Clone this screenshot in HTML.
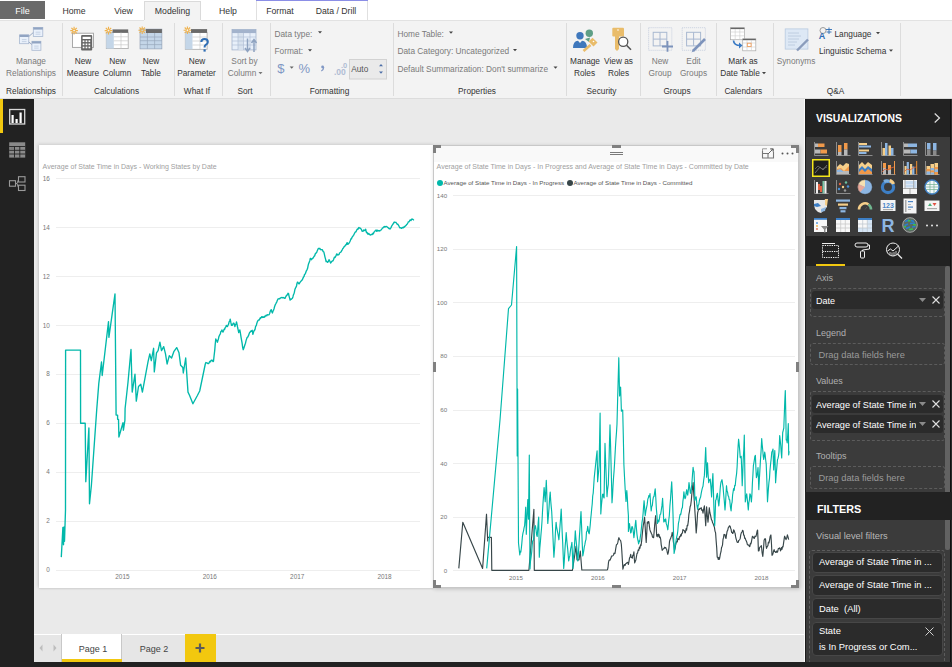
<!DOCTYPE html><html><head><meta charset="utf-8"><style>
html,body{margin:0;padding:0;width:952px;height:667px;overflow:hidden;background:#eaeaea}
body{position:relative;font-family:"Liberation Sans",sans-serif}
.t{position:absolute;line-height:0;white-space:nowrap}
</style></head><body>
<div style="position:absolute;left:0px;top:0px;width:952px;height:20px;background:#fff"></div>
<div style="position:absolute;left:0px;top:1px;width:45px;height:18px;background:#6a6a6a"></div>
<div class="t" style="left:-177.5px;width:400px;text-align:center;top:10.85px;font-size:9px;color:#fff;font-weight:400;letter-spacing:0px;">File</div>
<div class="t" style="left:-126px;width:400px;text-align:center;top:10.96px;font-size:8.7px;color:#333;font-weight:400;letter-spacing:0px;">Home</div>
<div class="t" style="left:-76.5px;width:400px;text-align:center;top:10.96px;font-size:8.7px;color:#333;font-weight:400;letter-spacing:0px;">View</div>
<div style="position:absolute;left:144px;top:1px;width:57px;height:20px;background:#f3f3f3;border:1px solid #dadada;border-bottom:none;box-sizing:border-box"></div>
<div class="t" style="left:-27.5px;width:400px;text-align:center;top:10.96px;font-size:8.7px;color:#333;font-weight:400;letter-spacing:0px;">Modeling</div>
<div class="t" style="left:28px;width:400px;text-align:center;top:10.96px;font-size:8.7px;color:#333;font-weight:400;letter-spacing:0px;">Help</div>
<div style="position:absolute;left:256px;top:0px;width:112px;height:20px;border-left:1px solid #e0e0e0;border-right:1px solid #e0e0e0;box-sizing:border-box"></div>
<div style="position:absolute;left:256px;top:0px;width:112px;height:1px;background:#8b8ee6"></div>
<div class="t" style="left:80px;width:400px;text-align:center;top:10.96px;font-size:8.7px;color:#333;font-weight:400;letter-spacing:0px;">Format</div>
<div class="t" style="left:136px;width:400px;text-align:center;top:10.96px;font-size:8.7px;color:#333;font-weight:400;letter-spacing:0px;">Data / Drill</div>
<div style="position:absolute;left:0px;top:20px;width:952px;height:78px;background:#f3f3f3"></div>
<div style="position:absolute;left:0px;top:20px;width:144px;height:1px;background:#e2e2e2"></div>
<div style="position:absolute;left:201px;top:20px;width:751px;height:1px;background:#e2e2e2"></div>
<div style="position:absolute;left:0px;top:98px;width:952px;height:1px;background:#dcdcdc"></div>
<div style="position:absolute;left:62px;top:23px;width:1px;height:73px;background:#dcdcdc"></div>
<div style="position:absolute;left:174px;top:23px;width:1px;height:73px;background:#dcdcdc"></div>
<div style="position:absolute;left:222px;top:23px;width:1px;height:73px;background:#dcdcdc"></div>
<div style="position:absolute;left:270px;top:23px;width:1px;height:73px;background:#dcdcdc"></div>
<div style="position:absolute;left:393px;top:23px;width:1px;height:73px;background:#dcdcdc"></div>
<div style="position:absolute;left:566px;top:23px;width:1px;height:73px;background:#dcdcdc"></div>
<div style="position:absolute;left:640px;top:23px;width:1px;height:73px;background:#dcdcdc"></div>
<div style="position:absolute;left:716px;top:23px;width:1px;height:73px;background:#dcdcdc"></div>
<div style="position:absolute;left:773px;top:23px;width:1px;height:73px;background:#dcdcdc"></div>
<div style="position:absolute;left:900px;top:23px;width:1px;height:73px;background:#dcdcdc"></div>
<div class="t" style="left:-169px;width:400px;text-align:center;top:61.09px;font-size:8.3px;color:#7a7a7a;font-weight:400;letter-spacing:0px;">Manage</div>
<div class="t" style="left:-169px;width:400px;text-align:center;top:73.09px;font-size:8.3px;color:#7a7a7a;font-weight:400;letter-spacing:0px;">Relationships</div>
<div class="t" style="left:-169px;width:400px;text-align:center;top:90.59px;font-size:8.3px;color:#333;font-weight:400;letter-spacing:0px;">Relationships</div>
<div class="t" style="left:-117px;width:400px;text-align:center;top:61.09px;font-size:8.3px;color:#333;font-weight:400;letter-spacing:0px;">New</div>
<div class="t" style="left:-117px;width:400px;text-align:center;top:73.09px;font-size:8.3px;color:#333;font-weight:400;letter-spacing:0px;">Measure</div>
<div class="t" style="left:-82.5px;width:400px;text-align:center;top:61.09px;font-size:8.3px;color:#333;font-weight:400;letter-spacing:0px;">New</div>
<div class="t" style="left:-83px;width:400px;text-align:center;top:73.09px;font-size:8.3px;color:#333;font-weight:400;letter-spacing:0px;">Column</div>
<div class="t" style="left:-49px;width:400px;text-align:center;top:61.09px;font-size:8.3px;color:#333;font-weight:400;letter-spacing:0px;">New</div>
<div class="t" style="left:-49px;width:400px;text-align:center;top:73.09px;font-size:8.3px;color:#333;font-weight:400;letter-spacing:0px;">Table</div>
<div class="t" style="left:-83.5px;width:400px;text-align:center;top:90.59px;font-size:8.3px;color:#333;font-weight:400;letter-spacing:0px;">Calculations</div>
<div class="t" style="left:-3px;width:400px;text-align:center;top:61.09px;font-size:8.3px;color:#333;font-weight:400;letter-spacing:0px;">New</div>
<div class="t" style="left:-3.5px;width:400px;text-align:center;top:73.09px;font-size:8.3px;color:#333;font-weight:400;letter-spacing:0px;">Parameter</div>
<div class="t" style="left:-3px;width:400px;text-align:center;top:90.59px;font-size:8.3px;color:#333;font-weight:400;letter-spacing:0px;">What If</div>
<div class="t" style="left:44.5px;width:400px;text-align:center;top:61.09px;font-size:8.3px;color:#7a7a7a;font-weight:400;letter-spacing:0px;">Sort by</div>
<div class="t" style="left:42px;width:400px;text-align:center;top:73.09px;font-size:8.3px;color:#7a7a7a;font-weight:400;letter-spacing:0px;">Column</div>
<div class="t" style="left:45px;width:400px;text-align:center;top:90.59px;font-size:8.3px;color:#333;font-weight:400;letter-spacing:0px;">Sort</div>
<div class="t" style="left:274.5px;top:33.59px;font-size:8.3px;color:#7a7a7a;font-weight:400;letter-spacing:0px;">Data type:</div>
<div class="t" style="left:274.5px;top:50.59px;font-size:8.3px;color:#7a7a7a;font-weight:400;letter-spacing:0px;">Format:</div>
<div class="t" style="left:129.5px;width:400px;text-align:center;top:90.59px;font-size:8.3px;color:#333;font-weight:400;letter-spacing:0px;">Formatting</div>
<div class="t" style="left:397.5px;top:33.59px;font-size:8.3px;color:#7a7a7a;font-weight:400;letter-spacing:0px;">Home Table:</div>
<div class="t" style="left:397.5px;top:51.09px;font-size:8.3px;color:#7a7a7a;font-weight:400;letter-spacing:0px;">Data Category: Uncategorized</div>
<div class="t" style="left:397.5px;top:68.59px;font-size:8.3px;color:#7a7a7a;font-weight:400;letter-spacing:0px;">Default Summarization: Don't summarize</div>
<div class="t" style="left:277px;width:400px;text-align:center;top:90.59px;font-size:8.3px;color:#333;font-weight:400;letter-spacing:0px;">Properties</div>
<div class="t" style="left:385px;width:400px;text-align:center;top:61.09px;font-size:8.3px;color:#333;font-weight:400;letter-spacing:0px;">Manage</div>
<div class="t" style="left:384.5px;width:400px;text-align:center;top:73.09px;font-size:8.3px;color:#333;font-weight:400;letter-spacing:0px;">Roles</div>
<div class="t" style="left:418.5px;width:400px;text-align:center;top:61.09px;font-size:8.3px;color:#333;font-weight:400;letter-spacing:0px;">View as</div>
<div class="t" style="left:418.5px;width:400px;text-align:center;top:73.09px;font-size:8.3px;color:#333;font-weight:400;letter-spacing:0px;">Roles</div>
<div class="t" style="left:401.5px;width:400px;text-align:center;top:90.59px;font-size:8.3px;color:#333;font-weight:400;letter-spacing:0px;">Security</div>
<div class="t" style="left:460px;width:400px;text-align:center;top:61.09px;font-size:8.3px;color:#7a7a7a;font-weight:400;letter-spacing:0px;">New</div>
<div class="t" style="left:460px;width:400px;text-align:center;top:73.09px;font-size:8.3px;color:#7a7a7a;font-weight:400;letter-spacing:0px;">Group</div>
<div class="t" style="left:493.5px;width:400px;text-align:center;top:61.09px;font-size:8.3px;color:#7a7a7a;font-weight:400;letter-spacing:0px;">Edit</div>
<div class="t" style="left:493.5px;width:400px;text-align:center;top:73.09px;font-size:8.3px;color:#7a7a7a;font-weight:400;letter-spacing:0px;">Groups</div>
<div class="t" style="left:477px;width:400px;text-align:center;top:90.59px;font-size:8.3px;color:#333;font-weight:400;letter-spacing:0px;">Groups</div>
<div class="t" style="left:543px;width:400px;text-align:center;top:61.09px;font-size:8.3px;color:#333;font-weight:400;letter-spacing:0px;">Mark as</div>
<div class="t" style="left:540px;width:400px;text-align:center;top:73.09px;font-size:8.3px;color:#333;font-weight:400;letter-spacing:0px;">Date Table</div>
<div class="t" style="left:543.3px;width:400px;text-align:center;top:90.59px;font-size:8.3px;color:#333;font-weight:400;letter-spacing:0px;">Calendars</div>
<div class="t" style="left:596px;width:400px;text-align:center;top:61.09px;font-size:8.3px;color:#7a7a7a;font-weight:400;letter-spacing:0px;">Synonyms</div>
<div class="t" style="left:834.5px;top:33.59px;font-size:8.3px;color:#333;font-weight:400;letter-spacing:0px;">Language</div>
<div class="t" style="left:819px;top:50.59px;font-size:8.3px;color:#333;font-weight:400;letter-spacing:0px;">Linguistic Schema</div>
<div class="t" style="left:635.5px;width:400px;text-align:center;top:90.59px;font-size:8.3px;color:#333;font-weight:400;letter-spacing:0px;">Q&amp;A</div>
<svg style="position:absolute;left:0;top:0" width="952" height="99" viewBox="0 0 952 99"><rect x="19.6" y="34.8" width="9.2" height="8.900000000000006" fill="#eaf1fb" stroke="#a9b8d0" stroke-width="0.8"/><rect x="19.6" y="34.8" width="9.2" height="2.2" fill="#91a4c2"/><path d="M21.900000000000002,39.599999999999994 H26.5 M21.900000000000002,41.599999999999994 H26.5" stroke="#b6c4da" stroke-width="0.7"/><rect x="33.3" y="27.4" width="9.5" height="9.100000000000001" fill="#eaf1fb" stroke="#a9b8d0" stroke-width="0.8"/><rect x="33.3" y="27.4" width="9.5" height="2.2" fill="#91a4c2"/><path d="M35.599999999999994,32.199999999999996 H40.5 M35.599999999999994,34.199999999999996 H40.5" stroke="#b6c4da" stroke-width="0.7"/><rect x="31.9" y="41.3" width="9.0" height="9.0" fill="#eaf1fb" stroke="#a9b8d0" stroke-width="0.8"/><rect x="31.9" y="41.3" width="9.0" height="2.2" fill="#91a4c2"/><path d="M34.199999999999996,46.099999999999994 H38.6 M34.199999999999996,48.099999999999994 H38.6" stroke="#b6c4da" stroke-width="0.7"/><path d="M28.8,36.5 L33.3,32.5 M28.8,42 L31.9,44.5" stroke="#98aac6" stroke-width="1"/><rect x="72.5" y="33.2" width="21" height="14.2" fill="#fff" stroke="#a0a0a0" stroke-width="0.9"/><path d="M75.30,30.60 L77.90,30.60 M74.95,31.45 L76.79,33.29 M74.10,31.80 L74.10,34.40 M73.25,31.45 L71.41,33.29 M72.90,30.60 L70.30,30.60 M73.25,29.75 L71.41,27.91 M74.10,29.40 L74.10,26.80 M74.95,29.75 L76.79,27.91 " stroke="#efb14b" stroke-width="1.1"/><circle cx="74.1" cy="30.6" r="1.3" fill="none" stroke="#efb14b" stroke-width="0.8"/><rect x="81.1" y="35.1" width="11.1" height="15.5" rx="1" fill="#666"/><rect x="82.6" y="36.8" width="8.1" height="2.2" fill="#fff"/><rect x="82.7" y="40.4" width="1.7" height="1.7" fill="#fff"/><rect x="82.7" y="43.5" width="1.7" height="1.7" fill="#fff"/><rect x="82.7" y="46.6" width="1.7" height="1.7" fill="#fff"/><rect x="85.6" y="40.4" width="1.7" height="1.7" fill="#fff"/><rect x="85.6" y="43.5" width="1.7" height="1.7" fill="#fff"/><rect x="85.6" y="46.6" width="1.7" height="1.7" fill="#fff"/><rect x="88.5" y="40.4" width="1.7" height="1.7" fill="#fff"/><rect x="88.5" y="43.5" width="1.7" height="1.7" fill="#fff"/><rect x="88.5" y="46.6" width="1.7" height="1.7" fill="#fff"/><rect x="106.3" y="32.6" width="21.9" height="16" fill="#fff" stroke="#a8a8a8" stroke-width="0.8"/><rect x="106.3" y="32.6" width="7.5" height="16" fill="#c4d6e8"/><rect x="112.5" y="29.4" width="15.7" height="3.4" fill="#6a6a6a"/><path d="M113.8,36.8 H128 M113.8,40.8 H128 M113.8,44.8 H128 M121,32.6 V48.6" stroke="#c8c8c8" stroke-width="0.7"/><path d="M109.70,30.60 L112.30,30.60 M109.35,31.45 L111.19,33.29 M108.50,31.80 L108.50,34.40 M107.65,31.45 L105.81,33.29 M107.30,30.60 L104.70,30.60 M107.65,29.75 L105.81,27.91 M108.50,29.40 L108.50,26.80 M109.35,29.75 L111.19,27.91 " stroke="#efb14b" stroke-width="1.1"/><circle cx="108.5" cy="30.6" r="1.3" fill="none" stroke="#efb14b" stroke-width="0.8"/><rect x="140" y="29.1" width="21.9" height="19.8" fill="#c4d6e8" stroke="#8a9ab0" stroke-width="0.6"/><rect x="146" y="29.1" width="15.9" height="3.9" fill="#6a6a6a"/><path d="M140,37 H162 M140,40.7 H162 M140,44.6 H162 M147.4,33 V48.9 M154.6,33 V48.9" stroke="#98a8bc" stroke-width="0.7"/><path d="M143.40,30.20 L146.00,30.20 M143.05,31.05 L144.89,32.89 M142.20,31.40 L142.20,34.00 M141.35,31.05 L139.51,32.89 M141.00,30.20 L138.40,30.20 M141.35,29.35 L139.51,27.51 M142.20,29.00 L142.20,26.40 M143.05,29.35 L144.89,27.51 " stroke="#efb14b" stroke-width="1.1"/><circle cx="142.2" cy="30.2" r="1.3" fill="none" stroke="#efb14b" stroke-width="0.8"/><rect x="185.3" y="32.6" width="21.8" height="16.7" fill="#fff" stroke="#a8a8a8" stroke-width="0.8"/><rect x="185.3" y="32.6" width="7.2" height="16.7" fill="#c4d6e8"/><rect x="191" y="29.1" width="16.1" height="3.8" fill="#6a6a6a"/><path d="M192.5,37 H207 M192.5,41 H207 M192.5,45 H207 M200,33 V49" stroke="#c8c8c8" stroke-width="0.7"/><path d="M188.60,30.20 L191.20,30.20 M188.25,31.05 L190.09,32.89 M187.40,31.40 L187.40,34.00 M186.55,31.05 L184.71,32.89 M186.20,30.20 L183.60,30.20 M186.55,29.35 L184.71,27.51 M187.40,29.00 L187.40,26.40 M188.25,29.35 L190.09,27.51 " stroke="#efb14b" stroke-width="1.1"/><circle cx="187.4" cy="30.2" r="1.3" fill="none" stroke="#efb14b" stroke-width="0.8"/><path d="M201.3,42 Q201.5,39 204.5,39 Q207.8,39 207.8,42 Q207.8,44 205.5,45 Q204.6,45.6 204.6,47.5" stroke="#2e6db4" stroke-width="2.1" fill="none"/><rect x="203.5" y="49.3" width="2.2" height="2.3" fill="#2e6db4"/><rect x="232" y="29.5" width="24" height="20.4" fill="#e8f0fa" stroke="#a3b3cc" stroke-width="0.8"/><rect x="232" y="29.5" width="24" height="3.6" fill="#a3b3cc"/><rect x="238" y="33" width="5.5" height="16.9" fill="#d8e2ee"/><path d="M232,37 H256 M232,41 H256 M232,45 H256 M238,33 V50 M243.5,33 V50 M250,33 V50" stroke="#b2c0d6" stroke-width="0.7"/><path d="M247.5,38.5 V51 M245,48 L247.5,51.5 L250,48" stroke="#8fa3c0" stroke-width="1.5" fill="none"/><path d="M254,52 V40 M251.5,43 L254,39.5 L256.5,43" stroke="#8fa3c0" stroke-width="1.5" fill="none"/><path d="M318,31.3 L322,31.3 L320,33.6z" fill="#444"/><path d="M308,49.3 L312,49.3 L310,51.599999999999994z" fill="#444"/><path d="M289.7,66.5 L293.7,66.5 L291.7,68.8z" fill="#666"/><text x="277.3" y="73.2" font-family="Liberation Sans" font-size="13" fill="#8097c4">$</text><text x="298.6" y="73.2" font-family="Liberation Sans" font-size="13" fill="#8097c4">%</text><circle cx="322.6" cy="67" r="1.4" fill="#8097c4"/><path d="M323.8,67 Q323.8,69.5 321.3,71" stroke="#8097c4" stroke-width="1.1" fill="none"/><text x="334" y="74.5" font-family="Liberation Sans" font-size="8.5" font-weight="700" fill="#b0bcd4">.00</text><text x="341" y="68.3" font-family="Liberation Sans" font-size="7.5" font-weight="700" fill="#b0bcd4">.0</text><rect x="349.5" y="59.5" width="37" height="19.5" fill="#eaeaea" stroke="#d2d2d2" stroke-width="1"/><path d="M379,66.2 L383,66.2 L381,64z M379,71.6 L383,71.6 L381,73.8z" fill="#4d6fa8"/><path d="M449,31.5 L453,31.5 L451,33.8z" fill="#444"/><path d="M513,49 L517,49 L515,51.3z" fill="#444"/><path d="M553.5,66.5 L557.5,66.5 L555.5,68.8z" fill="#444"/><path d="M258.5,72 L262.5,72 L260.5,74.3z" fill="#777"/><path d="M762,72 L766,72 L764,74.3z" fill="#444"/><path d="M876,32 L880,32 L878,34.3z" fill="#444"/><path d="M889,49.5 L893,49.5 L891,51.8z" fill="#444"/><circle cx="589.3" cy="33.3" r="3.7" fill="#5e9f86"/><path d="M585,39 L590,37.5 L589,42z" fill="#5e9f86"/><circle cx="580" cy="35.8" r="3.7" fill="#3f78bc"/><path d="M573,48 Q573,41 578,40.7 L580,43 L582,40.7 Q587,41 587,48z" fill="#3f78bc"/><path d="M583.5,51 L590.5,45" stroke="#e9bc6a" stroke-width="2.6"/><path d="M588.5,41.5 L592.5,37.8 L597.5,42.5 L593.5,46.5 z" fill="#e9bc6a"/><circle cx="593.5" cy="41.5" r="0.8" fill="#fff"/><rect x="612.3" y="27.8" width="11.7" height="8.6" rx="1" fill="#e9bc6a"/><rect x="615" y="36" width="4" height="13" fill="#e9bc6a"/><path d="M615,49 L617,51 L619,49z" fill="#e9bc6a"/><circle cx="618" cy="30" r="0.8" fill="#fff"/><circle cx="623.2" cy="41.8" r="4.6" fill="#fff" stroke="#555" stroke-width="1.3"/><path d="M626.5,45.2 L631,49.7" stroke="#555" stroke-width="1.6"/><rect x="648.6" y="27.7" width="23.2" height="22.6" fill="none" stroke="#bcc7d9" stroke-width="0.8" stroke-dasharray="1,1"/><rect x="653.2" y="32.3" width="13.6" height="13.6" fill="none" stroke="#a8b8d0" stroke-width="1"/><path d="M660,32.3 V45.9 M653.2,39.1 H666.8" stroke="#a8b8d0" stroke-width="1"/><path d="M667.5,41.1 V51.8 M662,46.5 H673" stroke="#7d93bb" stroke-width="1.8"/><rect x="682.2" y="27.7" width="23.2" height="22.6" fill="none" stroke="#bcc7d9" stroke-width="0.8" stroke-dasharray="1,1"/><rect x="686.6" y="32.3" width="14" height="13.6" fill="none" stroke="#a8b8d0" stroke-width="1"/><path d="M693.6,32.3 V45.9 M686.6,39.1 H700.6" stroke="#a8b8d0" stroke-width="1"/><path d="M693,51 L705,39" stroke="#7d93bb" stroke-width="2.6"/><path d="M691.5,52.5 L693.2,49 L694.8,50.8z" fill="#7d93bb"/><rect x="730.6" y="27.7" width="13.8" height="12" fill="#fff" stroke="#aaa" stroke-width="0.7"/><rect x="730.6" y="27.7" width="13.8" height="1.4" fill="#666"/><path d="M730.6,32 H744.4 M730.6,35.8 H744.4 M735.2,29 V39.7 M739.8,29 V39.7" stroke="#ccc" stroke-width="0.6"/><rect x="742.7" y="38.8" width="13.1" height="12" fill="#fff" stroke="#aaa" stroke-width="0.7"/><rect x="742.7" y="38.8" width="13.1" height="1.4" fill="#666"/><path d="M742.7,43 H755.8 M742.7,47 H755.8 M747,40 V50.8 M751.4,40 V50.8" stroke="#ccc" stroke-width="0.6"/><rect x="747.3" y="43.2" width="3.8" height="3.3" fill="none" stroke="#f0a060" stroke-width="0.9"/><path d="M733.5,40.5 Q733.8,45.5 740.5,45.5" stroke="#3a7ac4" stroke-width="1.7" fill="none"/><path d="M739,42.5 L742.5,45.5 L739,48.5z" fill="#3a7ac4"/><rect x="785.2" y="28.9" width="22.7" height="20.2" fill="#dde8f5" stroke="#b8cae0" stroke-width="0.8"/><path d="M788,33 H799 M788,36 H801 M788,39 H799 M788,42 H797 M788,45 H795" stroke="#b8c6da" stroke-width="0.8"/><path d="M797,50.5 L808,39.5" stroke="#8a9cbc" stroke-width="2.4"/><circle cx="823" cy="30.5" r="3" fill="none" stroke="#777" stroke-width="0.7"/><text x="818.8" y="39" font-family="Liberation Sans" font-size="9" font-weight="700" fill="#2e6db4">A</text><path d="M826,29.5 H832 M829,27.5 V34 M826.5,32 H831.5" stroke="#2e6db4" stroke-width="0.9"/></svg>
<div class="t" style="left:351.2px;top:68.50px;font-size:8.3px;color:#555;font-weight:400;letter-spacing:0px;">Auto</div>
<div style="position:absolute;left:0px;top:99px;width:34px;height:568px;background:#222"></div>
<div style="position:absolute;left:0px;top:99px;width:3px;height:34px;background:#f2c80f"></div>
<svg style="position:absolute;left:8px;top:108px" width="19" height="18"><rect x="1.7" y="1.5" width="15" height="14.5" fill="none" stroke="#d8d8d8" stroke-width="1.3"/><rect x="3.5" y="7" width="2.2" height="8" fill="#fff"/><rect x="7.5" y="11" width="2.2" height="4" fill="#fff"/><rect x="11.5" y="4.5" width="2.2" height="10.5" fill="#fff"/></svg>
<svg style="position:absolute;left:8px;top:141px" width="19" height="18"><rect x="1.2" y="1.3" width="16" height="15.3" fill="#8a8a8a"/><path d="M1.2,5.5 H17.2 M1.2,9.3 H17.2 M1.2,13 H17.2 M6.5,5.5 V16.6 M11.8,5.5 V16.6" stroke="#222" stroke-width="0.9"/><rect x="2.5" y="6.3" width="3.3" height="2.3" fill="#7a7a7a"/></svg>
<svg style="position:absolute;left:8px;top:175px" width="19" height="18"><rect x="1.5" y="5.7" width="6" height="5.5" fill="none" stroke="#9a9a9a" stroke-width="1.1"/><rect x="10.5" y="1.7" width="6.5" height="5.3" fill="none" stroke="#9a9a9a" stroke-width="1.1"/><rect x="10.5" y="10.2" width="6.5" height="5.3" fill="none" stroke="#9a9a9a" stroke-width="1.1"/><path d="M7.5,8.5 H9 L10.5,4.5 M9,8.5 L10.5,12.8" stroke="#9a9a9a" stroke-width="1" fill="none"/></svg>
<div style="position:absolute;left:34px;top:99px;width:771px;height:535px;background:#eaeaea"></div>
<div style="position:absolute;left:39px;top:145px;width:395px;height:443px;background:#fff;box-shadow:-1px -1px 3px rgba(0,0,0,0.12), 0 1px 2px rgba(0,0,0,0.1)"></div>
<div style="position:absolute;left:433px;top:145px;width:366px;height:443px;background:#fff;box-shadow:1px 1px 4px rgba(0,0,0,0.2)"></div>
<div class="t" style="left:42.6px;top:166.55px;font-size:7px;color:#a0a0a0;font-weight:400;letter-spacing:0px;">Average of State Time in Days - Working States by Date</div>
<div style="position:absolute;left:56px;top:178px;width:364px;height:1px;background:#eeeeee"></div>
<div class="t" style="left:-350.2px;width:400px;text-align:right;top:178.86px;font-size:6.4px;color:#777;font-weight:400;letter-spacing:0px;">16</div>
<div style="position:absolute;left:56px;top:227px;width:364px;height:1px;background:#eeeeee"></div>
<div class="t" style="left:-350.2px;width:400px;text-align:right;top:227.76px;font-size:6.4px;color:#777;font-weight:400;letter-spacing:0px;">14</div>
<div style="position:absolute;left:56px;top:276px;width:364px;height:1px;background:#eeeeee"></div>
<div class="t" style="left:-350.2px;width:400px;text-align:right;top:276.66px;font-size:6.4px;color:#777;font-weight:400;letter-spacing:0px;">12</div>
<div style="position:absolute;left:56px;top:325px;width:364px;height:1px;background:#eeeeee"></div>
<div class="t" style="left:-350.2px;width:400px;text-align:right;top:325.56px;font-size:6.4px;color:#777;font-weight:400;letter-spacing:0px;">10</div>
<div style="position:absolute;left:56px;top:374px;width:364px;height:1px;background:#eeeeee"></div>
<div class="t" style="left:-350.2px;width:400px;text-align:right;top:374.46px;font-size:6.4px;color:#777;font-weight:400;letter-spacing:0px;">8</div>
<div style="position:absolute;left:56px;top:423px;width:364px;height:1px;background:#eeeeee"></div>
<div class="t" style="left:-350.2px;width:400px;text-align:right;top:423.36px;font-size:6.4px;color:#777;font-weight:400;letter-spacing:0px;">6</div>
<div style="position:absolute;left:56px;top:472px;width:364px;height:1px;background:#eeeeee"></div>
<div class="t" style="left:-350.2px;width:400px;text-align:right;top:472.26px;font-size:6.4px;color:#777;font-weight:400;letter-spacing:0px;">4</div>
<div style="position:absolute;left:56px;top:521px;width:364px;height:1px;background:#eeeeee"></div>
<div class="t" style="left:-350.2px;width:400px;text-align:right;top:521.16px;font-size:6.4px;color:#777;font-weight:400;letter-spacing:0px;">2</div>
<div style="position:absolute;left:56px;top:570px;width:364px;height:1px;background:#eeeeee"></div>
<div class="t" style="left:-350.2px;width:400px;text-align:right;top:570.06px;font-size:6.4px;color:#777;font-weight:400;letter-spacing:0px;">0</div>
<div class="t" style="left:-77.6px;width:400px;text-align:center;top:576.56px;font-size:6.4px;color:#777;font-weight:400;letter-spacing:0px;">2015</div>
<div class="t" style="left:9.800000000000011px;width:400px;text-align:center;top:576.56px;font-size:6.4px;color:#777;font-weight:400;letter-spacing:0px;">2016</div>
<div class="t" style="left:97.19999999999999px;width:400px;text-align:center;top:576.56px;font-size:6.4px;color:#777;font-weight:400;letter-spacing:0px;">2017</div>
<div class="t" style="left:184.5px;width:400px;text-align:center;top:576.56px;font-size:6.4px;color:#777;font-weight:400;letter-spacing:0px;">2018</div>
<div style="position:absolute;left:433px;top:145px;width:366px;height:443px;border:1px solid #c8c8c8;box-sizing:border-box"></div>
<div style="position:absolute;left:434px;top:146px;width:364px;height:16px;background:#f9f9f9"></div>
<div class="t" style="left:436.6px;top:167.25px;font-size:7px;color:#a0a0a0;font-weight:400;letter-spacing:0px;">Average of State Time in Days - In Progress and Average of State Time in Days - Committed by Date</div>
<div style="position:absolute;left:437px;top:180px;width:6px;height:6px;border-radius:50%;background:#01b8aa"></div>
<div class="t" style="left:443.5px;top:183.03px;font-size:6.2px;color:#555;font-weight:400;letter-spacing:0px;">Average of State Time in Days - In Progress</div>
<div style="position:absolute;left:567px;top:180px;width:6px;height:6px;border-radius:50%;background:#374649"></div>
<div class="t" style="left:573.5px;top:183.03px;font-size:6.2px;color:#555;font-weight:400;letter-spacing:0px;">Average of State Time in Days - Committed</div>
<div style="position:absolute;left:453px;top:195px;width:342px;height:1px;background:#eeeeee"></div>
<div class="t" style="left:47.19999999999999px;width:400px;text-align:right;top:195.73px;font-size:6.2px;color:#777;font-weight:400;letter-spacing:0px;">140</div>
<div style="position:absolute;left:453px;top:249px;width:342px;height:1px;background:#eeeeee"></div>
<div class="t" style="left:47.19999999999999px;width:400px;text-align:right;top:249.30px;font-size:6.2px;color:#777;font-weight:400;letter-spacing:0px;">120</div>
<div style="position:absolute;left:453px;top:302px;width:342px;height:1px;background:#eeeeee"></div>
<div class="t" style="left:47.19999999999999px;width:400px;text-align:right;top:302.87px;font-size:6.2px;color:#777;font-weight:400;letter-spacing:0px;">100</div>
<div style="position:absolute;left:453px;top:356px;width:342px;height:1px;background:#eeeeee"></div>
<div class="t" style="left:47.19999999999999px;width:400px;text-align:right;top:356.44px;font-size:6.2px;color:#777;font-weight:400;letter-spacing:0px;">80</div>
<div style="position:absolute;left:453px;top:410px;width:342px;height:1px;background:#eeeeee"></div>
<div class="t" style="left:47.19999999999999px;width:400px;text-align:right;top:410.01px;font-size:6.2px;color:#777;font-weight:400;letter-spacing:0px;">60</div>
<div style="position:absolute;left:453px;top:463px;width:342px;height:1px;background:#eeeeee"></div>
<div class="t" style="left:47.19999999999999px;width:400px;text-align:right;top:463.58px;font-size:6.2px;color:#777;font-weight:400;letter-spacing:0px;">40</div>
<div style="position:absolute;left:453px;top:517px;width:342px;height:1px;background:#eeeeee"></div>
<div class="t" style="left:47.19999999999999px;width:400px;text-align:right;top:517.15px;font-size:6.2px;color:#777;font-weight:400;letter-spacing:0px;">20</div>
<div style="position:absolute;left:453px;top:570px;width:342px;height:1px;background:#eeeeee"></div>
<div class="t" style="left:47.19999999999999px;width:400px;text-align:right;top:570.72px;font-size:6.2px;color:#777;font-weight:400;letter-spacing:0px;">0</div>
<div class="t" style="left:316px;width:400px;text-align:center;top:578.03px;font-size:6.2px;color:#777;font-weight:400;letter-spacing:0px;">2015</div>
<div class="t" style="left:397.9px;width:400px;text-align:center;top:578.03px;font-size:6.2px;color:#777;font-weight:400;letter-spacing:0px;">2016</div>
<div class="t" style="left:479.70000000000005px;width:400px;text-align:center;top:578.03px;font-size:6.2px;color:#777;font-weight:400;letter-spacing:0px;">2017</div>
<div class="t" style="left:561.5px;width:400px;text-align:center;top:578.03px;font-size:6.2px;color:#777;font-weight:400;letter-spacing:0px;">2018</div>
<div style="position:absolute;left:433px;top:145px;width:8px;height:3px;background:#808080"></div>
<div style="position:absolute;left:433px;top:145px;width:3px;height:8px;background:#808080"></div>
<div style="position:absolute;left:791px;top:145px;width:8px;height:3px;background:#808080"></div>
<div style="position:absolute;left:796px;top:145px;width:3px;height:8px;background:#808080"></div>
<div style="position:absolute;left:433px;top:585px;width:8px;height:3px;background:#808080"></div>
<div style="position:absolute;left:433px;top:580px;width:3px;height:8px;background:#808080"></div>
<div style="position:absolute;left:791px;top:585px;width:8px;height:3px;background:#808080"></div>
<div style="position:absolute;left:796px;top:580px;width:3px;height:8px;background:#808080"></div>
<div style="position:absolute;left:612px;top:145px;width:9px;height:3px;background:#808080"></div>
<div style="position:absolute;left:612px;top:585px;width:9px;height:3px;background:#808080"></div>
<div style="position:absolute;left:433px;top:362px;width:3px;height:10px;background:#808080"></div>
<div style="position:absolute;left:796px;top:362px;width:3px;height:10px;background:#808080"></div>
<svg style="position:absolute;left:760px;top:146px" width="36" height="14"><path d="M2.5,5 V12 H13.5 V5.5 M2.5,12 M2.5,7.5 H8 V12" stroke="#777" stroke-width="1.1" fill="none"/><path d="M2.5,5 V2.8 H7 M10,2.8 H13.5 V5.5" stroke="#999" stroke-width="1" fill="none"/><path d="M8,8 L13,3 M10.5,3 H13 V5.5" stroke="#666" stroke-width="1" fill="none"/><circle cx="22.5" cy="7.5" r="1" fill="#555"/><circle cx="27.5" cy="7.5" r="1" fill="#555"/><circle cx="32.5" cy="7.5" r="1" fill="#555"/></svg>
<div style="position:absolute;left:610px;top:152px;width:13px;height:1px;background:#7a7a7a"></div>
<div style="position:absolute;left:610px;top:154px;width:13px;height:1px;background:#7a7a7a"></div>
<svg style="position:absolute;left:0;top:0" width="952" height="667" viewBox="0 0 952 667"><polyline points="61.3,557.1 62.9,527.4 63.5,544.7 64.0,527.0 64.5,541.3 65.5,509.9 65.6,350.1 80.5,350.1 80.6,423.2 85.2,423.2 85.8,481.7 88.9,428.0 89.5,503.7 91.4,485.2 96.7,410.0 98.8,383.4 101.5,362.0 102.2,375.5 108.5,321.6 108.9,337.3 115.0,293.9 116.1,415.1 117.6,415.1 117.6,419.3 118.5,419.3 118.9,437.0 123.0,422.7 123.4,430.2 124.9,420.5 125.1,408.5 128.0,382.2 131.0,349.5 132.2,392.1 135.0,374.2 136.3,401.1 138.5,386.5 140.8,384.3 142.4,392.1 145.3,376.4 148.0,361.8 149.8,353.9 151.3,360.7 153.6,348.3 154.3,371.9 156.5,352.8 158.1,350.6 159.9,342.2 161.5,350.6 163.7,346.7 165.5,353.9 167.1,364.0 169.3,355.7 171.6,358.0 173.8,351.7 176.7,347.6 179.0,352.8 180.6,365.2 182.8,367.4 183.3,373.0 185.7,358.0 188.0,392.1 189.6,395.5 192.9,403.8 197.4,395.5 199.7,391.0 205.3,364.0 205.7,362.9 206.0,362.5 206.6,362.8 207.2,362.9 207.8,363.5 208.4,363.6 208.9,363.2 209.5,361.9 210.1,361.2 210.6,361.8 211.1,360.4 211.7,360.2 212.3,360.2 212.9,361.6 213.5,361.3 214.1,355.7 214.7,350.6 215.2,344.5 215.8,338.9 216.3,340.2 216.9,340.6 217.4,342.2 217.9,340.5 218.4,339.0 218.9,336.6 219.4,335.5 219.9,334.7 220.4,333.5 220.9,331.5 221.4,331.4 221.9,329.9 222.4,331.1 223.0,332.1 223.6,330.7 224.1,329.2 224.7,329.3 225.2,327.6 225.8,326.8 226.3,325.4 226.9,326.5 227.5,326.5 228.0,325.3 228.6,324.1 229.1,321.9 229.7,321.0 230.2,319.1 230.8,322.2 231.5,325.4 232.1,325.4 232.7,324.8 233.2,323.1 233.8,323.1 234.4,324.3 234.9,326.5 235.4,324.6 236.0,324.2 236.5,322.0 237.1,324.6 237.6,327.5 238.1,329.7 238.7,332.6 239.2,331.3 239.8,329.9 240.4,333.0 240.9,336.3 241.5,339.9 242.1,343.2 242.6,347.0 243.2,349.7 243.8,348.2 244.3,346.7 244.9,344.8 245.5,343.2 246.0,340.9 246.6,338.9 247.2,337.3 247.7,337.1 248.2,336.2 248.8,334.9 249.3,333.3 249.9,332.1 250.5,331.9 251.1,330.8 251.6,331.2 252.2,330.3 252.6,332.5 252.9,334.4 253.4,332.6 254.0,330.8 254.5,330.4 255.1,329.1 255.6,326.3 256.2,325.8 256.7,323.8 257.3,321.9 257.8,320.9 258.4,320.0 258.9,320.1 259.5,319.7 260.1,318.0 260.6,318.2 261.2,317.5 261.7,316.7 262.2,317.5 262.7,316.8 263.2,317.4 263.7,317.3 264.2,316.5 264.7,317.0 265.2,315.9 265.7,316.0 266.2,315.2 266.8,315.7 267.4,314.7 267.9,314.8 268.4,314.9 269.0,314.8 269.6,313.7 270.1,311.8 270.7,310.3 271.3,309.7 271.9,311.9 272.4,313.0 273.0,311.1 273.5,310.3 274.1,308.5 274.7,306.3 275.2,304.9 275.8,303.8 276.4,302.6 276.9,301.6 277.4,300.3 278.0,298.9 278.6,298.8 279.1,298.6 279.7,298.8 280.3,298.0 280.9,297.8 281.6,297.5 282.2,297.4 282.8,297.9 283.4,297.5 283.9,297.8 284.5,298.3 285.0,298.4 285.5,297.1 286.0,296.5 286.5,295.2 287.0,295.1 287.5,294.7 288.0,293.3 288.5,293.4 289.0,295.8 289.6,298.1 290.1,300.1 290.7,299.0 291.2,299.4 291.8,298.7 292.4,298.3 292.9,296.9 293.4,294.9 293.9,293.7 294.4,292.2 294.9,289.5 295.5,288.0 296.0,287.2 296.5,286.0 297.0,283.4 297.5,282.1 298.0,282.6 298.6,283.4 299.1,283.9 299.7,282.9 300.2,282.2 300.8,281.4 301.4,280.7 301.9,280.3 302.5,279.4 303.0,278.1 303.5,277.1 304.0,276.6 304.5,274.5 305.0,274.2 305.5,273.3 306.0,271.7 306.5,270.5 307.0,269.8 307.6,268.3 308.1,265.7 308.6,263.7 309.2,262.2 309.8,260.7 310.3,258.5 310.9,258.5 311.5,259.7 312.1,258.8 312.6,258.1 313.1,258.1 313.7,257.0 314.2,256.1 314.7,255.8 315.2,254.0 315.7,253.3 316.2,252.9 316.7,252.4 317.2,250.9 317.7,249.7 318.2,248.7 318.7,248.4 319.3,248.7 319.9,248.4 320.4,249.5 321.0,249.8 321.6,249.6 322.2,249.7 322.7,250.4 323.2,251.7 323.8,251.8 324.4,254.4 325.0,257.1 325.5,258.9 326.1,261.5 326.6,261.3 327.1,261.8 327.6,262.4 328.3,261.5 329.0,259.7 329.5,260.5 330.1,261.7 330.6,263.0 331.2,262.2 331.8,261.6 332.3,260.9 332.9,260.9 333.5,259.7 334.0,258.3 334.5,257.1 335.1,257.5 335.6,256.4 336.1,255.6 336.6,254.0 337.2,254.1 337.8,255.1 338.4,254.7 339.0,254.6 339.6,252.8 340.2,252.5 340.7,252.2 341.2,251.6 341.7,250.7 342.2,249.8 342.7,248.8 343.2,248.2 343.7,247.4 344.2,246.5 344.7,246.5 345.2,245.7 345.8,244.7 346.3,244.7 346.8,242.9 347.4,242.8 347.6,244.2 347.9,244.4 348.4,243.8 348.9,243.3 349.4,242.5 349.9,241.6 350.4,240.4 351.0,238.7 351.5,238.9 352.0,237.3 352.5,236.6 353.0,236.1 353.6,235.3 354.2,234.0 354.8,232.8 355.4,231.9 355.9,231.9 356.4,230.8 356.9,229.7 357.5,229.0 358.0,229.2 358.5,228.0 359.0,227.4 359.6,228.2 360.2,228.1 360.8,228.7 361.5,229.6 362.1,231.4 362.6,231.1 363.1,231.2 363.6,230.0 364.2,230.6 364.7,230.4 365.2,229.9 365.7,229.2 366.1,231.5 366.6,232.8 367.1,232.4 367.6,233.6 368.1,234.3 368.7,233.4 369.2,234.1 369.7,234.4 370.2,235.0 370.7,234.8 371.3,234.5 371.8,234.3 372.3,234.5 372.9,233.2 373.4,233.7 373.9,232.3 374.5,231.6 375.1,230.8 375.6,230.5 376.1,230.0 376.6,231.3 377.1,231.2 377.6,230.2 378.2,230.8 378.7,230.6 379.2,230.7 379.7,231.0 380.2,230.3 380.8,230.2 381.3,229.6 381.9,228.8 382.4,228.1 383.0,227.8 383.5,227.0 384.1,227.1 384.6,226.5 385.1,227.0 385.7,226.6 386.2,226.4 386.7,226.6 387.3,227.1 387.8,227.4 388.4,227.9 388.9,228.6 389.4,228.4 390.0,229.0 390.5,228.5 391.1,227.4 391.6,226.3 392.1,225.3 392.6,224.6 393.1,224.0 393.7,222.8 394.2,222.0 394.7,222.5 395.2,222.4 395.8,222.3 396.3,222.9 396.8,223.6 397.3,224.4 397.8,224.1 398.4,225.2 398.9,225.9 399.4,227.1 399.9,227.8 400.4,227.8 400.9,227.6 401.4,228.4 401.9,228.2 402.5,227.5 403.0,227.7 403.5,227.8 404.0,226.7 404.6,227.0 405.1,226.2 405.6,225.9 406.2,225.2 406.7,224.4 407.3,223.9 407.8,223.0 408.3,221.8 408.9,221.8 409.4,221.1 409.9,220.1 410.4,220.0 411.0,220.5 411.5,219.2 412.0,219.5 412.6,219.2 413.2,219.5 413.8,220.4" fill="none" stroke="#01b8aa" stroke-width="1.35" stroke-linejoin="round"/><polyline points="458.8,568.4 462.8,522.3 482.6,568.4 486.5,514.2 487.7,540.9 487.7,537.4 491.4,537.4 491.8,570.3 528.9,570.3 533.9,509.3 534.3,570.3 572.4,570.3 576.1,546.1 577.0,559.8 579.0,559.8 580.3,551.0 581.8,570.0 607.0,570.0 607.5,569.6 608.0,567.5 608.5,562.3 609.0,560.3 609.5,559.8 610.0,560.2 610.5,559.1 611.0,558.1 611.5,556.1 612.0,556.0 612.5,556.0 613.0,555.6 613.5,555.0 614.0,553.1 614.5,553.7 615.0,553.5 615.7,548.8 616.4,544.9 616.9,544.3 617.4,543.8 617.9,542.2 618.4,539.3 618.9,537.7 619.5,539.1 620.1,540.0 620.7,540.8 621.3,544.0 621.8,550.7 622.4,560.7 622.9,569.2 623.4,567.0 623.9,565.6 624.4,564.5 625.0,565.5 625.6,563.8 626.2,563.5 626.8,562.9 627.3,562.5 627.9,562.3 628.4,564.5 629.0,561.3 629.5,558.1 630.1,556.9 630.7,554.3 631.2,557.4 631.8,557.5 632.3,558.2 632.8,555.0 633.4,555.4 633.9,551.9 634.3,558.5 634.7,562.9 635.3,561.4 635.9,559.7 636.4,556.8 637.0,553.5 637.6,553.0 638.2,549.8 638.8,550.5 639.4,547.2 639.9,548.3 640.5,544.9 641.0,545.6 641.6,541.4 642.1,536.1 642.7,530.1 643.3,525.1 644.0,521.3 644.6,517.2 645.1,525.6 645.7,535.5 646.2,542.4 646.8,532.2 647.3,522.0 647.8,523.2 648.4,521.5 648.9,522.0 649.4,526.5 649.9,529.7 650.4,531.4 650.9,532.3 651.5,533.8 652.0,534.6 652.5,537.1 653.1,537.5 653.6,537.7 654.1,532.2 654.6,525.7 655.1,520.6 655.6,515.7 656.2,526.6 656.7,536.1 657.3,534.5 657.9,536.8 658.5,534.1 659.1,534.6 659.6,537.6 660.2,537.0 660.7,539.3 661.2,544.6 661.7,547.4 662.2,550.3 662.8,549.5 663.4,548.8 664.0,548.5 664.6,547.2 665.1,548.0 665.7,547.5 666.2,548.7 666.7,549.5 667.3,552.5 667.8,554.3 668.4,552.1 669.0,547.2 669.5,541.5 670.1,539.3 670.6,538.7 671.2,536.7 671.7,535.6 672.2,532.4 672.8,535.8 673.4,542.2 673.9,544.2 674.5,550.3 675.0,548.6 675.6,545.0 676.2,542.6 676.7,541.3 677.3,541.9 677.8,538.4 678.4,539.2 679.0,539.6 679.5,536.7 680.1,536.9 680.7,534.7 681.2,536.0 681.8,533.2 682.4,533.1 682.9,529.5 683.5,530.1 684.0,530.5 684.5,530.8 685.0,532.9 685.5,532.1 686.1,528.5 686.6,530.2 687.2,525.4 687.7,525.7 688.3,521.7 688.9,514.4 689.5,511.3 690.1,506.8 690.7,505.2 691.3,500.5 691.9,493.3 692.5,487.4 693.1,482.6 693.7,492.9 694.3,501.3 694.9,511.3 695.5,520.5 696.2,532.9 696.9,524.8 697.6,513.1 698.2,510.6 698.8,509.0 699.4,509.5 700.0,508.3 700.6,508.7 701.2,507.7 701.8,510.4 702.4,509.9 703.0,513.1 703.7,508.9 704.4,505.9 705.0,514.1 705.7,525.7 706.2,516.1 706.6,506.8 707.3,515.4 708.0,522.1 708.6,515.8 709.3,507.7 709.9,512.7 710.5,514.9 711.0,517.6 711.5,519.8 712.0,520.3 712.6,522.8 713.2,523.8 713.8,525.7 714.4,527.1 715.0,531.1 715.6,532.9 716.1,540.3 716.7,547.6 717.2,557.1 717.8,557.5 718.3,559.5 718.9,557.4 719.4,559.3 719.9,557.0 720.4,553.8 721.0,551.7 721.5,547.8 722.0,546.5 722.5,545.1 723.0,539.5 723.5,537.7 724.0,534.3 724.5,535.0 725.0,534.6 725.5,537.6 726.0,538.4 726.6,534.4 727.1,531.4 727.7,530.3 728.3,527.6 728.9,527.0 729.5,525.8 730.1,526.2 730.6,528.2 731.1,529.3 731.6,532.5 732.1,532.3 732.6,533.4 733.1,533.1 733.6,529.8 734.1,530.3 734.6,532.1 735.1,533.4 735.6,536.7 736.1,538.8 736.6,540.4 737.1,542.1 737.7,542.5 738.2,542.4 738.7,540.5 739.2,540.1 739.7,539.5 740.2,538.4 740.8,534.6 741.4,532.7 742.0,532.0 742.6,530.3 743.1,530.9 743.7,535.2 744.2,535.4 744.7,538.4 745.2,538.2 745.7,539.7 746.3,541.0 746.8,542.2 747.3,544.4 747.8,544.9 748.3,545.1 748.9,545.0 749.4,546.6 749.9,546.5 750.4,543.4 750.9,543.9 751.4,542.0 751.9,539.2 752.4,536.3 752.9,536.6 753.4,537.4 753.9,538.2 754.4,538.4 754.9,536.1 755.5,536.6 756.0,536.2 756.5,534.3 757.1,531.0 757.6,530.1 758.0,539.1 758.4,551.0 759.0,550.8 759.5,547.9 760.1,547.0 760.8,546.4 761.4,545.7 762.1,552.6 762.8,556.5 763.5,548.8 764.1,540.3 764.8,538.8 765.5,538.9 766.0,545.4 766.5,548.4 767.2,546.6 767.9,545.7 768.4,542.2 769.0,542.8 769.5,540.3 770.2,536.2 770.9,534.9 771.5,544.3 772.0,555.1 772.5,555.0 773.1,553.0 773.6,551.0 774.1,549.6 774.6,551.5 775.1,551.7 775.6,552.4 776.1,552.2 776.6,551.0 777.1,552.3 777.6,551.8 778.3,548.6 779.0,548.4 779.5,547.9 780.0,548.6 780.5,550.9 781.0,549.7 781.5,547.5 782.0,549.3 782.5,546.6 783.0,547.0 783.5,543.7 784.1,539.4 784.6,536.2 785.3,537.8 786.0,539.6 786.7,538.2 787.4,534.9 788.0,536.9 788.7,539.6" fill="none" stroke="#374649" stroke-width="1.15" stroke-linejoin="round"/><polyline points="486.7,568.4 500.0,420.0 508.5,308.6 511.5,305.0 516.6,246.5 517.2,456.0 517.6,389.0 518.5,543.0 519.8,555.0 520.3,551.4 520.8,552.1 521.3,548.5 521.8,543.6 522.4,536.5 523.0,532.8 523.5,531.1 524.0,528.2 524.6,525.7 525.2,517.1 525.7,507.2 526.0,521.9 526.3,534.3 526.8,521.1 527.3,509.3 527.8,499.6 528.1,510.7 528.5,519.1 528.9,486.8 529.3,455.0 529.6,513.0 530.0,569.0 530.5,561.1 531.1,556.9 531.7,552.0 532.2,545.2 532.7,540.9 533.3,540.5 533.8,537.1 534.3,530.3 534.9,527.1 535.4,525.7 536.0,529.5 536.6,534.7 537.2,536.5 537.7,529.5 538.2,522.4 538.7,517.0 539.0,536.8 539.3,557.2 539.8,548.1 540.4,541.7 540.9,535.4 541.5,528.5 542.0,521.3 542.5,511.8 543.0,503.4 543.6,494.9 544.1,487.6 544.7,494.5 545.2,501.7 545.8,490.2 546.3,480.4 546.8,492.9 547.3,510.5 547.8,523.5 548.4,515.9 549.0,508.3 549.6,498.6 550.2,492.0 550.7,500.5 551.2,506.4 551.7,511.5 552.2,521.4 552.8,533.7 553.4,546.7 553.9,557.2 554.5,549.3 555.0,541.5 555.5,530.8 556.1,522.4 556.6,527.0 557.1,529.6 557.6,532.2 558.2,535.2 558.9,539.8 559.5,532.5 560.0,525.9 560.6,518.1 561.2,509.0 561.7,520.9 562.2,533.1 562.7,542.8 563.2,555.5 563.7,568.4 564.2,562.4 564.7,553.7 565.2,545.6 565.7,539.9 566.2,532.5 566.7,539.0 567.2,544.6 567.7,549.1 568.2,555.1 568.7,561.0 569.2,557.9 569.8,555.9 570.3,551.8 570.8,548.2 571.4,545.5 571.9,542.4 572.4,553.5 572.9,568.4 573.5,557.2 574.1,550.4 574.7,542.1 575.3,530.8 575.8,537.2 576.3,542.5 576.8,547.6 577.3,555.0 577.8,561.0 578.3,554.7 578.9,545.6 579.4,536.4 579.9,529.4 580.5,518.7 581.0,511.5 581.6,526.4 582.2,543.0 582.8,556.0 583.3,553.5 583.8,550.3 584.3,546.8 584.8,544.9 585.4,541.4 586.0,539.3 586.5,531.8 587.1,531.2 587.7,526.3 588.2,530.1 588.7,532.8 589.2,533.8 589.7,529.8 590.2,525.1 590.7,519.0 591.2,514.2 591.7,508.7 592.2,504.0 592.7,496.0 593.2,493.1 593.7,485.7 594.2,478.1 594.7,473.1 595.3,467.5 595.9,461.9 596.5,455.8 597.1,450.8 597.4,465.7 597.6,481.8 598.1,476.6 598.6,471.6 599.1,465.7 599.6,439.8 600.1,413.0 600.5,463.3 600.8,514.0 601.4,505.5 602.0,499.7 602.6,494.2 603.1,494.1 603.6,497.0 604.1,497.9 604.5,472.1 605.0,443.4 605.5,457.9 606.0,471.2 606.5,484.6 607.0,496.6 607.6,489.5 608.3,484.3 608.9,465.9 609.4,445.4 610.0,424.9 610.5,442.7 611.0,461.9 611.5,481.4 612.0,502.8 612.5,496.1 613.0,486.3 613.5,478.1 614.0,471.9 614.5,464.4 615.0,455.3 615.5,446.2 616.0,438.6 616.5,432.1 617.0,424.0 617.6,400.6 618.2,378.9 618.8,357.7 619.2,377.7 619.6,396.0 620.1,391.3 620.6,387.0 621.0,398.4 621.4,411.2 622.0,410.5 622.7,410.0 623.3,435.5 623.9,464.8 624.5,476.8 625.2,489.7 625.6,495.3 626.0,501.5 626.4,494.8 626.8,490.5 627.3,497.3 627.9,508.9 628.4,515.7 628.4,523.6 628.4,531.4 629.0,526.3 629.5,523.5 630.1,528.7 630.7,533.0 631.2,532.2 631.8,526.9 632.3,526.7 632.8,528.4 633.4,532.6 633.9,537.7 634.5,532.8 635.2,524.8 635.8,520.4 636.4,528.3 637.0,534.6 637.5,538.4 638.1,541.0 638.6,544.0 639.1,540.8 639.7,541.7 640.2,537.7 640.8,534.2 641.4,528.3 642.0,522.4 642.6,518.8 643.1,513.4 643.6,506.3 644.1,500.7 644.7,508.5 645.2,515.7 645.9,511.0 646.5,507.8 647.1,504.9 647.8,499.2 648.4,497.6 648.9,495.5 649.5,496.8 650.0,493.6 650.6,503.8 651.2,511.0 651.7,506.8 652.3,505.6 652.8,500.7 653.4,497.0 654.0,496.6 654.6,492.8 655.2,488.9 655.8,498.0 656.3,507.8 656.9,514.7 657.5,523.5 658.1,520.0 658.8,521.9 659.4,518.8 660.0,514.6 660.7,514.0 661.3,510.0 662.0,505.4 662.6,498.3 663.2,510.4 663.8,522.0 664.4,519.6 665.1,521.3 665.7,518.8 666.2,523.4 666.8,525.1 667.3,527.1 667.8,529.8 668.3,524.6 668.8,519.8 669.3,515.7 669.9,506.0 670.5,499.4 671.1,490.0 671.7,481.8 672.4,496.7 673.0,514.0 673.5,532.2 674.1,553.5 674.6,550.8 675.1,546.0 675.7,543.5 676.2,539.5 676.7,536.9 677.3,534.6 677.8,531.0 678.4,523.7 679.0,520.7 679.5,517.5 680.1,514.4 680.7,514.6 681.2,512.1 681.8,508.7 682.4,507.6 682.9,501.2 683.4,497.8 683.9,491.9 684.5,496.7 685.0,498.7 685.6,497.4 686.2,492.1 686.8,489.7 687.2,493.9 687.7,495.1 688.4,489.6 689.0,482.6 689.7,487.9 690.4,493.3 691.1,490.8 691.8,484.4 692.5,474.8 693.1,467.3 693.5,470.5 694.0,471.8 694.5,484.5 694.9,500.5 695.5,497.4 696.2,496.9 696.9,504.8 697.6,509.5 698.2,505.4 698.8,504.5 699.4,500.5 700.0,498.5 700.6,497.1 701.2,493.3 701.8,490.4 702.4,487.9 703.0,486.2 703.7,480.0 704.4,475.4 705.0,462.9 705.7,447.5 706.2,462.8 706.6,477.2 707.0,471.8 707.5,462.8 708.1,474.2 708.7,482.6 709.2,479.9 709.7,480.4 710.2,479.0 710.9,486.4 711.6,496.9 712.2,483.4 712.9,473.6 713.3,487.1 713.8,504.1 714.2,516.4 714.7,525.7 715.2,514.3 715.6,500.5 716.2,499.4 716.8,495.1 717.4,493.3 718.1,500.1 718.8,505.9 719.5,498.9 720.1,489.7 720.5,485.4 721.0,482.0 721.5,481.1 722.0,479.7 722.5,483.3 723.1,487.4 723.6,493.8 724.3,501.0 725.0,510.0 725.5,503.5 726.0,494.1 726.5,485.7 727.0,490.8 727.6,492.3 728.1,495.9 728.6,496.3 729.2,499.7 729.7,499.9 730.4,506.8 731.1,511.0 731.6,504.2 732.1,502.1 732.6,495.0 733.1,491.8 733.6,488.7 734.2,490.3 734.7,485.4 735.2,485.7 735.9,478.6 736.6,473.6 737.1,467.0 737.6,456.1 738.1,446.3 738.6,439.2 739.1,443.9 739.7,450.3 740.2,457.4 740.7,457.9 741.2,456.4 741.7,469.5 742.2,485.7 742.7,474.7 743.2,459.9 743.8,449.6 744.3,435.1 744.8,470.1 745.3,501.9 746.0,497.0 746.7,493.8 747.2,498.2 747.8,504.5 748.3,510.0 748.8,503.0 749.4,499.8 749.9,493.8 750.4,494.7 750.9,497.2 751.4,501.9 751.9,494.7 752.4,482.9 752.9,475.0 753.4,465.5 753.9,462.8 754.4,459.7 754.9,456.2 755.4,455.4 755.9,468.2 756.4,477.6 756.9,476.1 757.5,472.7 758.0,467.5 758.4,477.0 758.8,489.6 759.4,478.4 759.9,469.9 760.5,459.4 761.1,450.9 761.7,438.5 762.2,444.7 762.8,450.5 763.2,455.8 763.7,459.5 764.2,456.4 764.7,452.0 765.2,455.0 765.7,460.2 766.2,464.0 766.9,482.1 767.5,501.8 768.0,494.4 768.5,487.4 769.0,481.8 769.5,478.3 770.0,470.0 770.6,463.8 771.2,458.6 771.8,452.0 772.4,451.1 773.0,449.0 773.4,461.3 773.7,470.0 774.2,459.8 774.8,450.5 775.2,465.9 775.6,482.8 776.2,474.3 776.9,466.5 777.5,459.5 778.0,458.4 778.5,456.1 779.0,452.0 779.4,443.0 779.7,435.5 780.2,440.1 780.8,446.0 781.2,452.2 781.7,458.0 782.2,445.6 782.7,432.5 783.2,430.6 783.8,428.0 784.3,414.5 784.8,401.1 785.3,390.5 785.8,414.2 786.2,440.0 786.7,439.8 787.2,443.0 787.8,433.5 788.3,423.5 788.5,437.5 788.7,455.0 789.1,451.8 789.5,452.0" fill="none" stroke="#01b8aa" stroke-width="1.15" stroke-linejoin="round"/></svg>
<div style="position:absolute;left:34px;top:634px;width:771px;height:28px;background:#e6e6e6;border-top:1px solid #fff;box-sizing:border-box"></div>
<div style="position:absolute;left:61px;top:634px;width:61px;height:28px;background:#fff;border-left:1px solid #c8c8c8;border-right:1px solid #c8c8c8;box-sizing:border-box"></div>
<div style="position:absolute;left:62px;top:659px;width:60px;height:3px;background:#f2c80f"></div>
<div class="t" style="left:-107px;width:400px;text-align:center;top:648.85px;font-size:9px;color:#444;font-weight:400;letter-spacing:0px;">Page 1</div>
<div class="t" style="left:-46px;width:400px;text-align:center;top:648.85px;font-size:9px;color:#444;font-weight:400;letter-spacing:0px;">Page 2</div>
<div style="position:absolute;left:185px;top:634px;width:31px;height:28px;background:#f2c80f"></div>
<svg style="position:absolute;left:194px;top:642px" width="12" height="12"><path d="M6,1.5 V10.5 M1.5,6 H10.5" stroke="#5a5a5a" stroke-width="2.2"/></svg>
<svg style="position:absolute;left:36px;top:643px" width="24" height="10"><path d="M6.5,1.5 L3.5,5 L6.5,8.5z M17.5,1.5 L20.5,5 L17.5,8.5z" fill="#bdbdbd"/></svg>
<div style="position:absolute;left:61px;top:634px;width:1px;height:28px;background:#c8c8c8"></div>
<div style="position:absolute;left:0px;top:662px;width:952px;height:5px;background:#222"></div>
<div style="position:absolute;left:804px;top:99px;width:1px;height:563px;background:#fafafa"></div>
<div style="position:absolute;left:805px;top:99px;width:147px;height:568px;background:#3b3b3b"></div>
<div style="position:absolute;left:805px;top:99px;width:147px;height:38px;background:#222"></div>
<div style="position:absolute;left:805px;top:99px;width:1px;height:568px;background:#1c1c1c"></div>
<div class="t" style="left:816px;top:119.36px;font-size:10.4px;color:#fff;font-weight:700;letter-spacing:0px;">VISUALIZATIONS</div>
<div style="position:absolute;left:805px;top:236px;width:147px;height:30px;background:#222"></div>
<div style="position:absolute;left:816px;top:264px;width:29px;height:2px;background:#f2c80f"></div>
<div style="position:absolute;left:950px;top:99px;width:1px;height:568px;background:#111"></div>
<div style="position:absolute;left:951px;top:99px;width:1px;height:568px;background:#2c2c2c"></div>
<svg style="position:absolute;left:811.5px;top:139.5px" width="18" height="18" viewBox="0 0 18 18"><path d="M2.5,2 V15.5 H16.5" stroke="#8c8c8c" stroke-width="1" fill="none"/><rect x="3" y="3.5" width="3" height="3.5" fill="#b9b9b9"/><rect x="6" y="3.5" width="6.5" height="3.5" fill="#f0994a"/><rect x="3" y="9.5" width="5.5" height="4" fill="#b9b9b9"/><rect x="8.5" y="9.5" width="6.5" height="4" fill="#f0994a"/></svg>
<svg style="position:absolute;left:833.7px;top:139.5px" width="18" height="18" viewBox="0 0 18 18"><path d="M2.5,2 V15.5 H16.5" stroke="#8c8c8c" stroke-width="1" fill="none"/><rect x="4" y="5" width="3.5" height="7" fill="#f0994a"/><rect x="4" y="12" width="3.5" height="3.5" fill="#b9b9b9"/><rect x="10" y="3" width="3.5" height="6.5" fill="#f0994a"/><rect x="10" y="9.5" width="3.5" height="6" fill="#b9b9b9"/></svg>
<svg style="position:absolute;left:856.0px;top:139.5px" width="18" height="18" viewBox="0 0 18 18"><path d="M2.5,2 V15.5 H16.5" stroke="#8c8c8c" stroke-width="1" fill="none"/><rect x="3" y="3" width="8" height="2" fill="#f6cf8a"/><rect x="3" y="5.5" width="12" height="2" fill="#8db6e2"/><rect x="3" y="9.5" width="10" height="2" fill="#f6cf8a"/><rect x="3" y="12" width="7.5" height="2" fill="#8db6e2"/></svg>
<svg style="position:absolute;left:878.5px;top:139.5px" width="18" height="18" viewBox="0 0 18 18"><path d="M2.5,2 V15.5 H16.5" stroke="#8c8c8c" stroke-width="1" fill="none"/><rect x="3.5" y="8" width="2.5" height="7.5" fill="#f6cf8a"/><rect x="6" y="3" width="2.5" height="12.5" fill="#8db6e2"/><rect x="9.5" y="5.5" width="2.5" height="10" fill="#f6cf8a"/><rect x="12" y="8" width="2.5" height="7.5" fill="#8db6e2"/></svg>
<svg style="position:absolute;left:901.0px;top:139.5px" width="18" height="18" viewBox="0 0 18 18"><path d="M2.5,2 V15.5 H16.5" stroke="#8c8c8c" stroke-width="1" fill="none"/><rect x="3" y="3.5" width="4" height="3.5" fill="#b9b9b9"/><rect x="7" y="3.5" width="9" height="3.5" fill="#8db6e2"/><rect x="3" y="9.5" width="6.5" height="4" fill="#b9b9b9"/><rect x="9.5" y="9.5" width="6.5" height="4" fill="#8db6e2"/></svg>
<svg style="position:absolute;left:923.3px;top:139.5px" width="18" height="18" viewBox="0 0 18 18"><path d="M2.5,2 V15.5 H16.5" stroke="#8c8c8c" stroke-width="1" fill="none"/><rect x="4" y="3" width="3.5" height="6.5" fill="#8db6e2"/><rect x="4" y="9.5" width="3.5" height="6" fill="#8a8a8a"/><rect x="10" y="3" width="3.5" height="7.5" fill="#8db6e2"/><rect x="10" y="10.5" width="3.5" height="5" fill="#8a8a8a"/></svg>
<svg style="position:absolute;left:811.5px;top:159.0px" width="18" height="18" viewBox="0 0 18 18"><rect x="0.75" y="0.75" width="16.5" height="16.5" fill="#1e1e1e" stroke="#f5e61a" stroke-width="1.5"/><path d="M3,14 L8,8 L11,11 L15,6" stroke="#777" fill="none" stroke-width="0.9"/><path d="M3,10 L6,7 L10,10 L15,8" stroke="#666" fill="none" stroke-width="0.9"/></svg>
<svg style="position:absolute;left:833.7px;top:159.0px" width="18" height="18" viewBox="0 0 18 18"><path d="M2.5,2 V15.5 H16.5" stroke="#8c8c8c" stroke-width="1" fill="none"/><path d="M3,15 V8 L6,5 L9,7 L12,4 L15,5 V15z" fill="#f6cf8a"/><path d="M3,15 V10 L7,9 L10,12 L15,7 V15z" fill="#f0994a"/><path d="M3,15 V12 L15,12 V15z" fill="#b9b9b9"/><path d="M3,11 L6,10 L9,12 L9,13 L3,13z" fill="#8db6e2"/></svg>
<svg style="position:absolute;left:856.0px;top:159.0px" width="18" height="18" viewBox="0 0 18 18"><path d="M2.5,2 V15.5 H16.5" stroke="#8c8c8c" stroke-width="1" fill="none"/><path d="M3,15 V6 L6,3 L9,6 L12,3 L16,6 V15z" fill="#f6cf8a"/><path d="M3,15 V10 L6,7 L9,10 L12,7 L16,10 V15z" fill="#3d7fc6"/><path d="M3,15 V13 L6,10 L9,13 L12,10 L16,13 V15z" fill="#f0994a"/></svg>
<svg style="position:absolute;left:878.5px;top:159.0px" width="18" height="18" viewBox="0 0 18 18"><path d="M2.5,2 V15.5 H16.5" stroke="#8c8c8c" stroke-width="1" fill="none"/><rect x="4" y="4" width="3" height="11.5" fill="#f0994a"/><rect x="4" y="9" width="3" height="6.5" fill="#b9b9b9"/><rect x="9" y="6" width="3" height="9.5" fill="#f0994a"/><rect x="9" y="11" width="3" height="4.5" fill="#b9b9b9"/><path d="M3,13 L6,10 L9,11 L12,9 L15,8" stroke="#e06030" fill="none" stroke-width="0.8"/><rect x="15" y="2" width="1" height="13.5" fill="#f0994a"/></svg>
<svg style="position:absolute;left:901.0px;top:159.0px" width="18" height="18" viewBox="0 0 18 18"><path d="M2.5,2 V15.5 H16.5" stroke="#8c8c8c" stroke-width="1" fill="none"/><rect x="3.5" y="7" width="2.2" height="8.5" fill="#f6cf8a"/><rect x="5.7" y="3" width="2.2" height="12.5" fill="#8db6e2"/><rect x="9" y="5" width="2.2" height="10.5" fill="#f6cf8a"/><rect x="11.2" y="7.5" width="2.2" height="8" fill="#8db6e2"/><path d="M3,13 L6,10 L9,11 L12,9 L15,8" stroke="#e06030" fill="none" stroke-width="0.8"/><rect x="15" y="2" width="1.2" height="13.5" fill="#d08030"/></svg>
<svg style="position:absolute;left:923.3px;top:159.0px" width="18" height="18" viewBox="0 0 18 18"><path d="M2.5,2 V15.5 H16.5" stroke="#8c8c8c" stroke-width="1" fill="none"/><rect x="3.5" y="7" width="3.5" height="8.5" fill="#f6cf8a"/><rect x="3.5" y="10" width="3.5" height="2.5" fill="#f0994a"/><rect x="3.5" y="12.5" width="3.5" height="3" fill="#8db6e2"/><rect x="7.5" y="5" width="3.5" height="10.5" fill="#f6cf8a"/><rect x="7.5" y="9" width="3.5" height="2.5" fill="#8db6e2"/><rect x="7.5" y="11.5" width="3.5" height="2" fill="#f0994a"/><rect x="7.5" y="13.5" width="3.5" height="2" fill="#8db6e2"/><rect x="11.5" y="4" width="3.5" height="11.5" fill="#f6cf8a"/><rect x="11.5" y="8" width="3.5" height="2.5" fill="#f0994a"/><rect x="11.5" y="10.5" width="3.5" height="2.5" fill="#8db6e2"/><rect x="11.5" y="13" width="3.5" height="2.5" fill="#f0994a"/></svg>
<svg style="position:absolute;left:811.5px;top:178.0px" width="18" height="18" viewBox="0 0 18 18"><path d="M2.5,2 V15.5 H16.5" stroke="#8c8c8c" stroke-width="1" fill="none"/><rect x="4" y="4" width="2" height="11.5" fill="#f0f0f0"/><rect x="6" y="6" width="2" height="6" fill="#e06040"/><rect x="8" y="8" width="2" height="6" fill="#e06040"/><rect x="10.5" y="3" width="2" height="12.5" fill="#7ec8a8"/><rect x="12.5" y="3" width="2" height="12.5" fill="#f0f0f0"/></svg>
<svg style="position:absolute;left:833.7px;top:178.0px" width="18" height="18" viewBox="0 0 18 18"><path d="M2.5,2 V15.5 H16.5" stroke="#8c8c8c" stroke-width="1" fill="none"/><circle cx="6" cy="6" r="1.2" fill="#e06040"/><circle cx="12" cy="4.5" r="1.2" fill="#6cc0a0"/><circle cx="9" cy="9" r="1.2" fill="#f6cf8a"/><circle cx="5" cy="11" r="1.2" fill="#4a90d9"/><circle cx="14" cy="8.5" r="1.2" fill="#4a90d9"/><circle cx="11" cy="12.5" r="1.2" fill="#999"/></svg>
<svg style="position:absolute;left:856.0px;top:178.0px" width="18" height="18" viewBox="0 0 18 18"><circle cx="9" cy="9" r="7.3" fill="#8db6e2"/><path d="M9,9 L9,1.7 A7.3,7.3 0 0 0 2.3,6 z" fill="#f6e0b0"/><path d="M9,9 L2.3,6 A7.3,7.3 0 0 0 4,14.3 z" fill="#e8a898"/><circle cx="9" cy="9" r="7.3" fill="none" stroke="#2a2a2a" stroke-width="0.4"/></svg>
<svg style="position:absolute;left:878.5px;top:178.0px" width="18" height="18" viewBox="0 0 18 18"><circle cx="9" cy="9" r="5.6" fill="none" stroke="#3d7fc6" stroke-width="3.2"/><path d="M10.5,2.6 A5.6,5.6 0 0 1 14.5,6" stroke="#f6cf8a" stroke-width="3.2" fill="none"/><path d="M5,3.5 A5.6,5.6 0 0 1 10,3.4" stroke="#7aaee0" stroke-width="3.2" fill="none"/></svg>
<svg style="position:absolute;left:901.0px;top:178.0px" width="18" height="18" viewBox="0 0 18 18"><rect x="2" y="2" width="14" height="14" fill="#f4f4f4"/><rect x="4.5" y="3" width="8" height="3.5" fill="#c6daf0"/><rect x="4.5" y="7" width="8" height="2.5" fill="#c6daf0"/><rect x="13" y="3" width="2.5" height="7" fill="#c6daf0"/><path d="M2,10.5 H16 M9,10.5 V16 M4,2 V10.5 M12.7,2 V10.5" stroke="#777" stroke-width="0.6"/></svg>
<svg style="position:absolute;left:923.3px;top:178.0px" width="18" height="18" viewBox="0 0 18 18"><circle cx="9" cy="9" r="7" fill="#f4f8fc" stroke="#3d7fc6" stroke-width="1.3"/><path d="M3,6.5 H15 M2.5,9 H15.5 M3,11.5 H15 M7,2.5 V15.5 M11,2.5 V15.5" stroke="#70b090" stroke-width="0.7"/></svg>
<svg style="position:absolute;left:811.5px;top:197.0px" width="18" height="18" viewBox="0 0 18 18"><path d="M2,3 L12,3 L15,2 L15,10 L12,13 L9,16 L6,15 L3,12 L2,8z" fill="#e8e8e8"/><path d="M2,7 L6,6 L9,9 L5,10 L2,9z" fill="#3d7fc6"/><path d="M9,12 L14,10 L13,14 L9,15z" fill="#8db6e2"/><path d="M13,2 L16,2 L15,9 L13,8z" fill="#f6cf8a"/></svg>
<svg style="position:absolute;left:833.7px;top:197.0px" width="18" height="18" viewBox="0 0 18 18"><rect x="2" y="2.5" width="14" height="2.2" fill="#8db6e2"/><rect x="4" y="6.5" width="10" height="2.2" fill="#f6cf8a"/><rect x="5.5" y="10" width="7" height="2.2" fill="#8db6e2"/><rect x="6.5" y="13.2" width="5" height="2.2" fill="#8db6e2"/></svg>
<svg style="position:absolute;left:856.0px;top:197.0px" width="18" height="18" viewBox="0 0 18 18"><path d="M3,12.5 A6,6 0 0 1 12.5,7.5" stroke="#f6cf8a" stroke-width="2.6" fill="none"/><path d="M12.5,7.5 A6,6 0 0 1 15,12.5" stroke="#6fb58e" stroke-width="2.6" fill="none"/><path d="M9,12.5 L11,10" stroke="#555" stroke-width="1"/></svg>
<svg style="position:absolute;left:878.5px;top:197.0px" width="18" height="18" viewBox="0 0 18 18"><rect x="1.5" y="3" width="15" height="11" fill="#f4f4f4"/><text x="9" y="10.5" font-family="Liberation Sans" font-size="7" font-weight="700" fill="#4a86c8" text-anchor="middle">123</text><rect x="4" y="12" width="10" height="1.2" fill="#aaa"/></svg>
<svg style="position:absolute;left:901.0px;top:197.0px" width="18" height="18" viewBox="0 0 18 18"><rect x="2.5" y="1.5" width="13" height="15" fill="#f4f4f4"/><rect x="4" y="3" width="1.5" height="12" fill="#aaa"/><rect x="7" y="4" width="5" height="1.2" fill="#4a86c8"/><rect x="7" y="7" width="3" height="0.8" fill="#aaa"/><rect x="7" y="9.5" width="5" height="1.2" fill="#4a86c8"/><rect x="7" y="12" width="3" height="0.8" fill="#aaa"/></svg>
<svg style="position:absolute;left:923.3px;top:197.0px" width="18" height="18" viewBox="0 0 18 18"><rect x="1.5" y="3.5" width="15" height="10.5" fill="#f4f4f4"/><path d="M5,9 L7,6 L9,9z" fill="#4caf7a"/><path d="M9.5,6 L13.5,6 L11.5,9z" fill="#e05040"/><rect x="4" y="11" width="10" height="1.2" fill="#aaa"/></svg>
<svg style="position:absolute;left:811.5px;top:216.0px" width="18" height="18" viewBox="0 0 18 18"><rect x="2" y="2" width="13" height="14" fill="#f8f8f8"/><rect x="2" y="2" width="13" height="1.8" fill="#3d7fc6"/><circle cx="5" cy="7" r="0.9" fill="#4a90d9"/><circle cx="5" cy="10" r="0.9" fill="#f0b040"/><circle cx="5" cy="13" r="0.9" fill="#e07050"/><path d="M9,10 H16.5 L13.5,13.5 V16.5 H12 V13.5z" fill="#8c8c8c"/></svg>
<svg style="position:absolute;left:833.7px;top:216.0px" width="18" height="18" viewBox="0 0 18 18"><rect x="2" y="2" width="14" height="14" fill="#f8f8f8"/><rect x="2" y="2" width="14" height="2" fill="#3d7fc6"/><path d="M2,8 H16 M2,12 H16 M6.7,4 V16 M11.3,4 V16" stroke="#c8c8c8" stroke-width="0.8"/></svg>
<svg style="position:absolute;left:856.0px;top:216.0px" width="18" height="18" viewBox="0 0 18 18"><rect x="2" y="2" width="14" height="14" fill="#f8f8f8"/><rect x="2" y="2" width="14" height="2" fill="#3d7fc6"/><rect x="11.3" y="4" width="4.7" height="12" fill="#d6e6f6"/><rect x="2" y="12" width="14" height="4" fill="#d6e6f6"/><path d="M2,8 H16 M2,12 H16 M6.7,4 V16 M11.3,4 V16" stroke="#c0c8d0" stroke-width="0.8"/></svg>
<svg style="position:absolute;left:878.5px;top:216.0px" width="18" height="18" viewBox="0 0 18 18"><text x="9" y="16" font-family="Liberation Sans" font-size="18" font-weight="700" fill="#8db6e2" text-anchor="middle">R</text></svg>
<svg style="position:absolute;left:901.0px;top:216.0px" width="18" height="18" viewBox="0 0 18 18"><circle cx="9" cy="9" r="7.3" fill="#5a6a60" stroke="#b0b0b0" stroke-width="0.9"/><path d="M4,5.5 L8,4 M10,4.5 L13,5.5 M3.5,9.5 L7,8 M9,7.5 L14,7 M5,12.5 L9,11 M11,11 L14.5,10.5" stroke="#2a7fd0" stroke-width="1.6"/><path d="M7,5 L9.5,4.5 M12,8.5 L15,9 M3,11 L5,10.5 M8,13.5 L12,13" stroke="#3cc050" stroke-width="1.5"/></svg>
<svg style="position:absolute;left:923.3px;top:216.0px" width="18" height="18" viewBox="0 0 18 18"><circle cx="4" cy="9.5" r="1" fill="#e8e8e8"/><circle cx="9" cy="9.5" r="1" fill="#e8e8e8"/><circle cx="14" cy="9.5" r="1" fill="#e8e8e8"/></svg>
<svg style="position:absolute;left:933px;top:112px" width="8" height="12"><path d="M1.7,1.5 L6.5,6 L1.7,10.5" stroke="#e0e0e0" stroke-width="1.2" fill="none"/></svg>
<svg style="position:absolute;left:818px;top:240px" width="24" height="22"><path d="M4,3.5 H17" stroke="#eee" stroke-width="1"/><rect x="4.5" y="5.5" width="16" height="12" fill="none" stroke="#eee" stroke-width="1" stroke-dasharray="1.3,1"/><path d="M4.5,11.5 H20.5" stroke="#eee" stroke-width="1" stroke-dasharray="1.3,1"/></svg>
<svg style="position:absolute;left:852px;top:240px" width="20" height="22"><rect x="3" y="3" width="13" height="4" rx="2" fill="none" stroke="#eee" stroke-width="1"/><path d="M16,5 H17.5 V9 L10.5,10 V11" stroke="#eee" stroke-width="1" fill="none"/><rect x="8.5" y="11" width="4" height="7" rx="1" fill="none" stroke="#eee" stroke-width="1"/></svg>
<svg style="position:absolute;left:884px;top:240px" width="22" height="22"><circle cx="9" cy="9.5" r="6.5" fill="none" stroke="#eee" stroke-width="1"/><path d="M3.5,11 L6.5,9 L9,11 L14.5,6" stroke="#eee" stroke-width="1" fill="none"/><path d="M6,12 V15 M8,12.5 V15.5 M10,12 V16 M12,11 V15" stroke="#eee" stroke-width="0.8"/><path d="M13.5,14 L18,18.5" stroke="#eee" stroke-width="1.3"/></svg>
<div style="position:absolute;left:945px;top:266px;width:5px;height:226px;background:#626262;border-radius:2px 2px 0 0"></div>
<div class="t" style="left:816px;top:278.35px;font-size:9px;color:#b0b0b0;font-weight:400;letter-spacing:0px;">Axis</div>
<div style="position:absolute;left:810px;top:288px;width:135px;height:29px;border:1px dashed #5c5c5c;border-radius:3px;box-sizing:border-box"></div>
<div style="position:absolute;left:812px;top:291px;width:131px;height:18px;background:#2b2b2b;border-radius:3px"></div>
<div class="t" style="left:816px;top:300.85px;font-size:9px;color:#fff;font-weight:400;letter-spacing:0px;">Date</div>
<div class="t" style="left:816px;top:332.85px;font-size:9px;color:#b0b0b0;font-weight:400;letter-spacing:0px;">Legend</div>
<div style="position:absolute;left:810px;top:343px;width:135px;height:22px;border:1px dashed #5c5c5c;border-radius:3px;box-sizing:border-box"></div>
<div class="t" style="left:818.5px;top:354.75px;font-size:9.3px;color:#9a9a9a;font-weight:400;letter-spacing:0px;">Drag data fields here</div>
<div class="t" style="left:816px;top:380.85px;font-size:9px;color:#b0b0b0;font-weight:400;letter-spacing:0px;">Values</div>
<div style="position:absolute;left:810px;top:391px;width:135px;height:50px;border:1px dashed #5c5c5c;border-radius:3px;box-sizing:border-box"></div>
<div style="position:absolute;left:812px;top:395px;width:131px;height:18px;background:#2b2b2b;border-radius:3px"></div>
<div style="position:absolute;left:812px;top:415px;width:131px;height:18px;background:#2b2b2b;border-radius:3px"></div>
<div class="t" style="left:816px;top:398.5px;width:100px;height:12px;overflow:hidden;line-height:12px;font-size:9.2px;color:#fff">Average of State Time in Days</div>
<div class="t" style="left:816px;top:418.5px;width:100px;height:12px;overflow:hidden;line-height:12px;font-size:9.2px;color:#fff">Average of State Time in Days</div>
<div class="t" style="left:816px;top:455.85px;font-size:9px;color:#b0b0b0;font-weight:400;letter-spacing:0px;">Tooltips</div>
<div style="position:absolute;left:810px;top:466px;width:135px;height:23px;border:1px dashed #5c5c5c;border-radius:3px;box-sizing:border-box"></div>
<div class="t" style="left:818.5px;top:478.25px;font-size:9.3px;color:#9a9a9a;font-weight:400;letter-spacing:0px;">Drag data fields here</div>
<svg style="position:absolute;left:919px;top:298px" width="7" height="4"><path d="M0,0 L7,0 L3.5,4z" fill="#8a8a8a"/></svg>
<svg style="position:absolute;left:932px;top:296px" width="8" height="8"><path d="M0.5,0.5 L7.5,7.5 M7.5,0.5 L0.5,7.5" stroke="#e0e0e0" stroke-width="1.1"/></svg>
<svg style="position:absolute;left:919px;top:402px" width="7" height="4"><path d="M0,0 L7,0 L3.5,4z" fill="#8a8a8a"/></svg>
<svg style="position:absolute;left:932px;top:400px" width="8" height="8"><path d="M0.5,0.5 L7.5,7.5 M7.5,0.5 L0.5,7.5" stroke="#e0e0e0" stroke-width="1.1"/></svg>
<svg style="position:absolute;left:919px;top:422px" width="7" height="4"><path d="M0,0 L7,0 L3.5,4z" fill="#8a8a8a"/></svg>
<svg style="position:absolute;left:932px;top:420px" width="8" height="8"><path d="M0.5,0.5 L7.5,7.5 M7.5,0.5 L0.5,7.5" stroke="#e0e0e0" stroke-width="1.1"/></svg>
<div style="position:absolute;left:805px;top:492px;width:147px;height:28px;background:#222"></div>
<div class="t" style="left:817px;top:509.02px;font-size:10.8px;color:#fff;font-weight:700;letter-spacing:0px;">FILTERS</div>
<div style="position:absolute;left:945px;top:520px;width:5px;height:30px;background:#626262;border-radius:0 0 2px 2px"></div>
<div class="t" style="left:816px;top:535.75px;font-size:9.3px;color:#b8b8b8;font-weight:400;letter-spacing:0px;">Visual level filters</div>
<div style="position:absolute;left:809px;top:550px;width:136px;height:114px;border:1px dashed #5c5c5c;border-radius:3px;box-sizing:border-box"></div>
<div style="position:absolute;left:812px;top:552px;width:131px;height:21px;background:#2b2b2b;border:1px solid #474747;border-radius:4px;box-sizing:border-box"></div>
<div style="position:absolute;left:812px;top:575px;width:131px;height:21px;background:#2b2b2b;border:1px solid #474747;border-radius:4px;box-sizing:border-box"></div>
<div style="position:absolute;left:812px;top:598px;width:131px;height:21px;background:#2b2b2b;border:1px solid #474747;border-radius:4px;box-sizing:border-box"></div>
<div style="position:absolute;left:812px;top:622px;width:131px;height:34px;background:#2b2b2b;border:1px solid #474747;border-radius:4px;box-sizing:border-box"></div>
<div class="t" style="left:819px;top:562.21px;font-size:9.4px;color:#fff;font-weight:400;letter-spacing:0px;">Average of State Time in ...</div>
<div class="t" style="left:819px;top:585.21px;font-size:9.4px;color:#fff;font-weight:400;letter-spacing:0px;">Average of State Time in ...</div>
<div class="t" style="left:819px;top:608.51px;font-size:9.4px;color:#fff;font-weight:400;letter-spacing:0px;">Date&nbsp;&nbsp;(All)</div>
<div class="t" style="left:819px;top:631.21px;font-size:9.4px;color:#fff;font-weight:400;letter-spacing:0px;">State</div>
<div class="t" style="left:819px;top:646.71px;font-size:9.4px;color:#fff;font-weight:400;letter-spacing:0px;">is In Progress or Com...</div>
<div style="position:absolute;left:805px;top:662px;width:147px;height:5px;background:#222"></div>
<svg style="position:absolute;left:925px;top:627px" width="9" height="9"><path d="M0.5,0.5 L8.5,8.5 M8.5,0.5 L0.5,8.5" stroke="#d0d0d0" stroke-width="1"/></svg>
</body></html>
